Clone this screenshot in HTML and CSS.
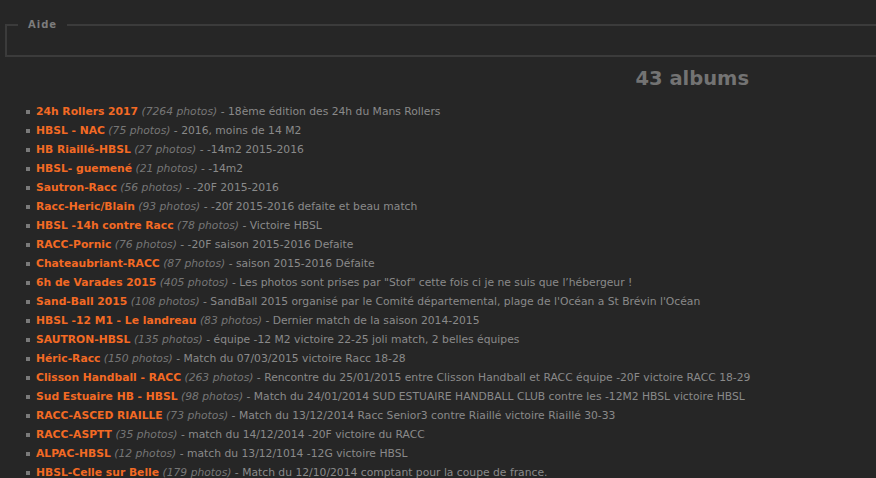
FILE: index.html
```html
<!DOCTYPE html>
<html lang="fr">
<head>
<meta charset="utf-8">
<title>Albums</title>
<link rel="stylesheet" href="styles.css">
</head>
<body>
<div class="page">
  <fieldset class="help">
    <legend class="help-title">Aide</legend>
  </fieldset>
  <h2 class="count">43 albums</h2>
  <ul class="albums">
    <li><a class="name">24h Rollers 2017</a> <span class="num">(7264 photos)</span> - 18ème édition des 24h du Mans Rollers</li>
    <li><a class="name">HBSL - NAC</a> <span class="num">(75 photos)</span> - 2016, moins de 14 M2</li>
    <li><a class="name">HB Riaillé-HBSL</a> <span class="num">(27 photos)</span> - -14m2 2015-2016</li>
    <li><a class="name">HBSL- guemené</a> <span class="num">(21 photos)</span> - -14m2</li>
    <li><a class="name">Sautron-Racc</a> <span class="num">(56 photos)</span> - -20F 2015-2016</li>
    <li><a class="name">Racc-Heric/Blain</a> <span class="num">(93 photos)</span> - -20f 2015-2016 defaite et beau match</li>
    <li><a class="name">HBSL -14h contre Racc</a> <span class="num">(78 photos)</span> - Victoire HBSL</li>
    <li><a class="name">RACC-Pornic</a> <span class="num">(76 photos)</span> - -20F saison 2015-2016 Defaite</li>
    <li><a class="name">Chateaubriant-RACC</a> <span class="num">(87 photos)</span> - saison 2015-2016 Défaite</li>
    <li><a class="name">6h de Varades 2015</a> <span class="num">(405 photos)</span> - Les photos sont prises par "Stof" cette fois ci je ne suis que l’hébergeur !</li>
    <li><a class="name">Sand-Ball 2015</a> <span class="num">(108 photos)</span> - SandBall 2015 organisé par le Comité départemental, plage de l'Océan a St Brévin l'Océan</li>
    <li><a class="name">HBSL -12 M1 - Le landreau</a> <span class="num">(83 photos)</span> - Dernier match de la saison 2014-2015</li>
    <li><a class="name">SAUTRON-HBSL</a> <span class="num">(135 photos)</span> - équipe -12 M2 victoire 22-25 joli match, 2 belles équipes</li>
    <li><a class="name">Héric-Racc</a> <span class="num">(150 photos)</span> - Match du 07/03/2015 victoire Racc 18-28</li>
    <li><a class="name">Clisson Handball - RACC</a> <span class="num">(263 photos)</span> - Rencontre du 25/01/2015 entre Clisson Handball et RACC équipe -20F victoire RACC 18-29</li>
    <li><a class="name">Sud Estuaire HB - HBSL</a> <span class="num">(98 photos)</span> - Match du 24/01/2014 SUD ESTUAIRE HANDBALL CLUB contre les -12M2 HBSL victoire HBSL</li>
    <li><a class="name">RACC-ASCED RIAILLE</a> <span class="num">(73 photos)</span> - Match du 13/12/2014 Racc Senior3 contre Riaillé victoire Riaillé 30-33</li>
    <li><a class="name">RACC-ASPTT</a> <span class="num">(35 photos)</span> - match du 14/12/2014 -20F victoire du RACC</li>
    <li><a class="name">ALPAC-HBSL</a> <span class="num">(12 photos)</span> - match du 13/12/1014 -12G victoire HBSL</li>
    <li><a class="name">HBSL-Celle sur Belle</a> <span class="num">(179 photos)</span> - Match du 12/10/2014 comptant pour la coupe de france.</li>
  </ul>
</div>
</body>
</html>
```
FILE: styles.css
```css
html, body {
  margin: 0;
  padding: 0;
  background: #262626;
  overflow: hidden;
}
body {
  font-family: "DejaVu Sans", Verdana, sans-serif;
  font-size: 10.75px;
  color: #8a8a8a;
}
.page {
  padding-top: 19px;
}
.help {
  margin: 0 0 0 5px;
  height: 38px;
  padding: 0;
  border: 2px solid #3b3b3b;
  border-right: 0;
  box-sizing: border-box;
}
.help-title {
  margin-left: 11px;
  padding: 0 10px;
  font-weight: bold;
  font-size: 10px;
  letter-spacing: 1px;
  color: #7c7c7c;
}
.count {
  margin: 10px 0 0 0;
  padding-right: 127px;
  text-align: right;
  font-size: 19.5px;
  line-height: 24px;
  font-weight: bold;
  color: #737373;
}
.albums {
  margin: 11px 0 0 0;
  padding: 0 0 0 36px;
  list-style: none;
  line-height: 19px;
}
.albums li {
  position: relative;
}
.albums li::before {
  content: "";
  position: absolute;
  left: -10px;
  top: 8px;
  width: 4px;
  height: 4px;
  background: #7a7a7a;
}
.name {
  color: #f36a24;
  font-weight: bold;
  text-decoration: none;
}
.num {
  font-style: italic;
  color: #767676;
}
```
